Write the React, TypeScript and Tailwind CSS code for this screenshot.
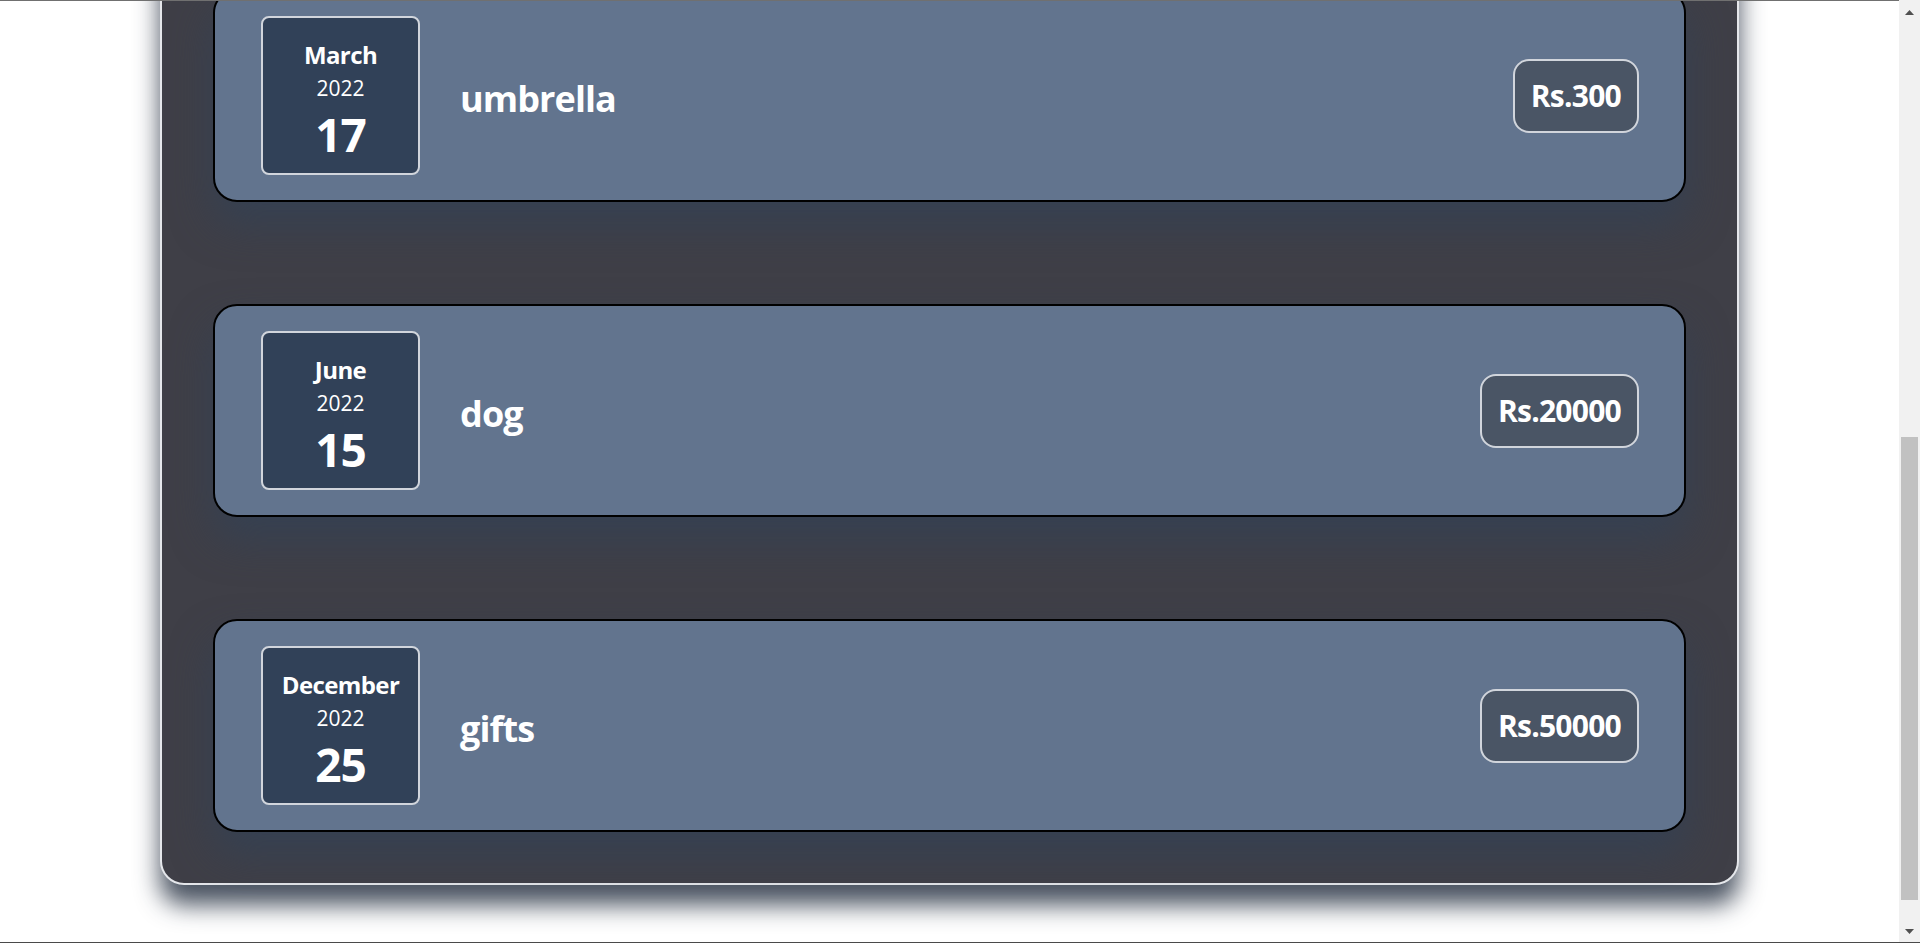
import React from 'react';

interface Expense {
  month: string;
  year: number;
  day: number;
  title: string;
  amount: number;
}

const expenses: Expense[] = [
  { month: 'March', year: 2022, day: 17, title: 'umbrella', amount: 300 },
  { month: 'June', year: 2022, day: 15, title: 'dog', amount: 20000 },
  { month: 'December', year: 2022, day: 25, title: 'gifts', amount: 50000 },
];

const ExpenseDate: React.FC<{ month: string; year: number; day: number }> = ({ month, year, day }) => (
  <div className="w-[159px] h-[159px] shrink-0 flex flex-col items-center pt-[20px] bg-slate-700 border-2 border-gray-300 rounded-lg text-white">
    <div className="text-2xl leading-[33px] font-bold tracking-tight">{month}</div>
    <div className="text-[21px] leading-[29px] mt-[3px]">{year}</div>
    <div className="text-[46px] leading-[63px] font-bold tracking-tight">{day}</div>
  </div>
);

const ExpenseItem: React.FC<{ expense: Expense }> = ({ expense }) => (
  <div className="flex items-center bg-slate-500 border-2 border-black rounded-3xl pl-[46px] pr-[45px] py-[25px] shadow-[0_22px_40px_rgba(51,65,85,0.75)]">
    <ExpenseDate month={expense.month} year={expense.year} day={expense.day} />
    <h2 className="ml-[40px] flex-1 pt-[7px] text-4xl leading-[40px] font-bold tracking-tight text-white">{expense.title}</h2>
    <div className="px-4 py-[17px] bg-gray-600 border-2 border-gray-300 rounded-2xl text-3xl leading-[36px] font-bold tracking-tight text-white">
      Rs.{expense.amount}
    </div>
  </div>
);

const App: React.FC = () => {
  return (
    <div className="h-screen flex bg-white border-b border-[#4a4a4a] font-['Open_Sans',sans-serif] overflow-hidden">
      {/* Page */}
      <div className="flex-1 border-t border-[#707070] overflow-hidden">
        <div className="w-[1579px] mx-auto -mt-[65px] px-[51px] pt-[51px] pb-[51px] bg-zinc-700 border-2 border-gray-200 rounded-3xl shadow-[0_20px_25px_rgba(30,41,59,0.8)]">
          <div className="flex flex-col gap-[102px]">
            {expenses.map((expense) => (
              <ExpenseItem key={expense.title} expense={expense} />
            ))}
          </div>
        </div>
      </div>

      {/* Scrollbar */}
      <div className="w-[21px] shrink-0 flex flex-col bg-[#f1f1f1]">
        <div className="h-[21px] flex items-center justify-center pt-[3px]">
          <svg width="9" height="5" viewBox="0 0 9 5">
            <polygon points="4.5,0 9,5 0,5" fill="#505050" />
          </svg>
        </div>
        <div className="flex-1" />
        <div className="h-[463px] mx-[2px] bg-[#c1c1c1]" />
        <div className="h-[21px] mt-[21px] flex items-center justify-center">
          <svg width="9" height="5" viewBox="0 0 9 5">
            <polygon points="0,0 9,0 4.5,5" fill="#505050" />
          </svg>
        </div>
      </div>
    </div>
  );
};

export default App;
